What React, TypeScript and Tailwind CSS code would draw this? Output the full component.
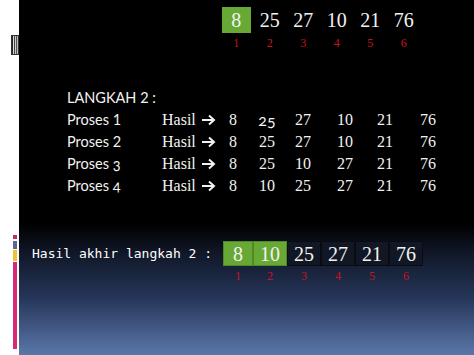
import React from "react";

const serif = "font-['Liberation_Serif','Times_New_Roman',serif]";
const sans = "font-['Lato','Open_Sans',sans-serif]";
const mono = "font-['DejaVu_Sans_Mono','Liberation_Mono',monospace]";

const topNums = ["8", "25", "27", "10", "21", "76"];
const rows = [
  ["Proses 1", ["8", "25", "27", "10", "21", "76"]],
  ["Proses 2", ["8", "25", "27", "10", "21", "76"]],
  ["Proses 3", ["8", "25", "10", "27", "21", "76"]],
  ["Proses 4", ["8", "10", "25", "27", "21", "76"]],
] as const;
const colW = ["w-[30px]", "w-[38px]", "w-[34px]", "w-[50px]", "w-[30px]", "w-[56px]"];
const finalNums = ["8", "10", "25", "27", "21", "76"];

const Arrow = () => (
  <svg width="15" height="12" viewBox="0 0 15 12" className="ml-[5px]">
    <path d="M1 6 H13 M8 1.5 L13 6 L8 10.5" fill="none" stroke="#f2f2f2" strokeWidth="2" />
  </svg>
);

export default function App() {
  return (
    <div className="flex h-[355px] w-[474px] overflow-hidden bg-white">
      {/* left strip */}
      <div className="relative w-[19px] shrink-0 bg-white">
        <div className="absolute left-[11px] top-[35px] flex h-[20px] w-[8px] border border-[#333] bg-[#999]">
          <div className="w-px bg-[#222]" />
          <div className="w-px bg-[#ddd]" />
          <div className="w-px bg-[#444]" />
          <div className="w-px bg-[#ccc]" />
          <div className="w-px bg-[#555]" />
          <div className="w-px bg-[#bbb]" />
        </div>
        <div className="absolute left-[13px] top-[235px] flex w-[4px] flex-col">
          <div className="h-[4px] bg-[#c92a6e]" />
          <div className="mt-[2px] h-[8px] bg-[#5a6a8c]" />
          <div className="mt-[1px] h-[11px] bg-[#f0c232]" />
          <div className="mt-[1px] h-[87px] bg-[#d82a79]" />
        </div>
      </div>

      {/* slide */}
      <div className="flex flex-1 flex-col bg-[linear-gradient(to_bottom,#000_0%,#000_63%,#0e1422_70%,#26365a_84%,#5a77aa_100%)] text-[#f2f2f2]">
        {/* top array */}
        <div className="ml-[200.5px] mt-[7px]">
          <div className={`flex h-[26px] items-center ${serif} text-[20px] leading-none`}>
            {topNums.map((n, i) => (
              <div key={i} className="flex w-[33.5px] justify-center">
                {i === 0 ? (
                  <div className="flex h-[26px] w-[29px] items-center justify-center bg-[#68a834]">{n}</div>
                ) : (
                  n
                )}
              </div>
            ))}
          </div>
          <div className={`mt-[3px] flex h-[14px] items-center ${serif} text-[12px] leading-none text-[#c8141e]`}>
            {[1, 2, 3, 4, 5, 6].map((n) => (
              <div key={n} className="w-[33.5px] text-center">
                {n}
              </div>
            ))}
          </div>
        </div>

        {/* langkah table */}
        <div className="ml-[48px] mt-[37px] flex flex-col">
          <div className={`flex h-[22px] items-center ${sans} text-[14.5px]`}>LANGKAH 2 :</div>
          {rows.map(([label, nums], r) => (
            <div key={label} className="flex h-[22px] items-center">
              <div className={`w-[95px] ${sans} text-[14.5px]`}>
                {label.slice(0, -1)}
                <span className={r > 1 ? "[font-feature-settings:'onum']" : ""}>{label.slice(-1)}</span>
              </div>
              <div className={`flex w-[56px] items-center ${serif} text-[16px]`}>
                Hasil
                <Arrow />
              </div>
              {nums.map((n, i) => (
                <div
                  key={i}
                  className={`${colW[i]} text-center ${
                    r === 0 && i === 1 ? `${sans} text-[16px] [font-feature-settings:'onum']` : `${serif} text-[16px]`
                  }`}
                >
                  {n}
                </div>
              ))}
            </div>
          ))}
        </div>

        {/* final */}
        <div className="mt-[44px] flex items-center pl-[13px]">
          <div className={`w-[191px] ${mono} text-[13px] text-white`}>Hasil akhir langkah 2 :</div>
          <div className={`flex h-[25px] ${serif} text-[20px] leading-none`}>
            {finalNums.map((n, i) => (
              <div
                key={i}
                className={`flex h-[25px] ${i === 0 ? "w-[30px]" : "w-[34px]"} items-center justify-center border ${
                  i < 2 ? "border-[#4f8a26] bg-[#68a834]" : "border-[#080b12] bg-[#111724]"
                }`}
              >
                {n}
              </div>
            ))}
          </div>
        </div>
        <div
          className={`ml-[204px] mt-[3px] flex h-[14px] items-center ${serif} text-[12px] leading-none text-[#c8141e]`}
        >
          {[1, 2, 3, 4, 5, 6].map((n, i) => (
            <div key={n} className={`${i === 0 ? "w-[30px]" : "w-[34px]"} text-center`}>
              {n}
            </div>
          ))}
        </div>
      </div>
    </div>
  );
}
